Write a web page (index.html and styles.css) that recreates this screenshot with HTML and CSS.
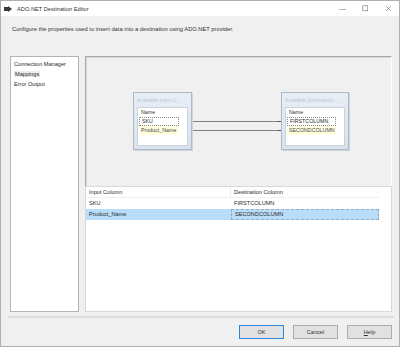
FILE: index.html
```html
<!DOCTYPE html>
<html>
<head>
<meta charset="utf-8">
<link rel="stylesheet" href="styles.css">
</head>
<body>
<div class="window">
  <div class="titlebar">
    <svg class="appicon" width="8" height="6" viewBox="0 0 8 6"><path d="M0 1h4v4H0z" fill="#3a3a3a"/><path d="M4 0l4 3-4 3z" fill="#3a3a3a"/></svg>
    <span class="title">ADO.NET Destination Editor</span>
    <div class="controls">
      <svg width="8" height="8" viewBox="0 0 8 8"><path d="M0 4.5h7" stroke="#666" stroke-width="0.5"/></svg>
      <svg width="8" height="8" viewBox="0 0 8 8"><rect x="0.8" y="0.8" width="5" height="5" fill="none" stroke="#555" stroke-width="0.5"/></svg>
      <svg width="8" height="8" viewBox="0 0 8 8"><path d="M1 1l5 5M6 1L1 6" stroke="#555" stroke-width="0.5"/></svg>
    </div>
  </div>
  <div class="body">
    <p class="desc">Configure the properties used to insert data into a destination using ADO.NET provider.</p>
    <div class="main">
      <div class="nav">
        <div class="nav-item">Connection Manager</div>
        <div class="nav-item"><span class="current">Mappings</span></div>
        <div class="nav-item">Error Output</div>
      </div>
      <div class="pane">
        <div class="diagram">
          <svg class="links" width="306" height="128" viewBox="0 0 306 128">
            <path d="M106 64.5H192" stroke="#505050" stroke-width="0.7"/>
            <path d="M106 73.5H192" stroke="#505050" stroke-width="0.7"/>
            <path d="M196 64.5h-4M196 73.5h-4" stroke="#505050" stroke-width="1.2"/>
          </svg>
          <div class="node node-in">
            <div class="node-title">Available Input C...</div>
            <div class="node-list">
              <div class="row head">Name</div>
              <div class="row focus">SKU</div>
              <div class="row hl">Product_Name</div>
            </div>
          </div>
          <div class="node node-out">
            <div class="node-title">Available Destination ...</div>
            <div class="node-list">
              <div class="row head">Name</div>
              <div class="row focus">FIRSTCOLUMN</div>
              <div class="row hl">SECONDCOLUMN</div>
            </div>
          </div>
        </div>
        <div class="grid">
          <div class="grow ghead">
            <div class="cell c1">Input Column</div>
            <div class="cell c2">Destination Column</div>
          </div>
          <div class="grow">
            <div class="cell c1">SKU</div>
            <div class="cell c2">FIRSTCOLUMN</div>
          </div>
          <div class="grow sel">
            <div class="cell c1">Product_Name</div>
            <div class="cell c2 fcell">SECONDCOLUMN</div>
          </div>
        </div>
      </div>
    </div>
    <div class="sep"></div>
    <div class="buttons">
      <button class="btn default">OK</button>
      <button class="btn">Cancel</button>
      <button class="btn"><u>H</u>elp</button>
    </div>
  </div>
</div>
</body>
</html>
```

FILE: styles.css
```css
* { box-sizing: border-box; }
html, body { margin: 0; padding: 0; }
body {
  width: 400px;
  height: 347px;
  overflow: hidden;
  background: #f0f0f0;
  font-family: "Liberation Sans", Arial, sans-serif;
  font-size: 5.6px;
  color: #2a2a2a;
}
.window {
  width: 400px;
  height: 347px;
  border: 1px solid #b0b0b0;
  background: #f0f0f0;
  display: flex;
  flex-direction: column;
}
.titlebar {
  height: 15px;
  background: #fff;
  display: flex;
  align-items: center;
  padding-left: 3px;
  flex: none;
}
.appicon { margin-right: 5px; }
.title { font-size: 5.7px; color: #333; }
.controls {
  margin-left: auto;
  display: flex;
  gap: 15px;
  padding-right: 6px;
}
.body {
  flex: 1;
  display: flex;
  flex-direction: column;
  padding: 0 7px 0 9px;
}
.desc {
  margin: 9px 0 0 2px;
  height: 8px;
  line-height: 8px;
  font-size: 5.75px;
  color: #333;
}
.main {
  margin-top: 23px;
  display: flex;
  gap: 6px;
  height: 256px;
}
.nav {
  width: 69px;
  background: #fff;
  border: 1px solid #b4b4b4;
  padding: 2px 0 0 3px;
}
.nav-item {
  height: 10px;
  line-height: 10px;
  white-space: nowrap;
}
.current {
  background: #ececec;
  padding: 0 1px;
}
.pane {
  flex: 1;
  display: flex;
  flex-direction: column;
}
.diagram {
  position: relative;
  height: 130px;
  background: #f0f0f0;
  border-top: 1px solid #a8a8a8;
  border-left: 1px solid #a8a8a8;
  border-right: 1px solid #fcfcfc;
  box-shadow: inset 1px 1px 0 #d8d8d8;
  overflow: hidden;
}
.links { position: absolute; left: 0; top: 0; }
.node {
  position: absolute;
  top: 35px;
  height: 58px;
  border: 1px solid #aeb9c6;
  background: linear-gradient(#e8eef6, #d9e2ed);
  box-shadow: 1px 1px 0 #d0d5dc;
  padding: 0 3px 3px 3px;
  display: flex;
  flex-direction: column;
}
.node-in { left: 47px; width: 59px; }
.node-out { left: 195px; width: 68px; }
.node-title {
  height: 14px;
  line-height: 14px;
  font-size: 5.2px;
  color: #bcc7d4;
  white-space: nowrap;
  overflow: hidden;
}
.node-list {
  flex: 1;
  background: #fff;
  border: 1px solid #cad2dc;
  padding: 0 8px 0 1px;
}
.row {
  height: 9px;
  line-height: 9px;
  padding-left: 2px;
  font-size: 5.3px;
  white-space: nowrap;
}
.row.head { color: #333; }
.row.focus { border: 1px dotted #888; line-height: 7px; }
.row.hl { background: #ffffe0; color: #444; }
.grid {
  flex: 1;
  background: #fff;
  border: 1px solid #d8d8d8;
  padding-right: 12px;
}
.grow {
  display: flex;
  height: 11px;
  line-height: 11px;
}
.cell {
  padding-left: 3px;
  white-space: nowrap;
}
.c1 { width: 145px; }
.c2 { flex: 1; }
.ghead .c1 { border-right: 1px solid #ececec; }
.ghead { border-bottom: 1px solid #f0f0f0; }
.sel { background: #b9dcf9; }
.fcell { border: 1px dashed #93acc6; line-height: 9px; }
.sep {
  margin: 4px -2px 0 -2px;
  height: 2px;
  background: #dcdcdc;
}
.buttons {
  display: flex;
  justify-content: flex-end;
  gap: 9px;
  margin-top: 7px;
}
.btn {
  width: 45px;
  height: 14px;
  border: 1px solid #adadad;
  background: #e1e1e1;
  font-family: "Liberation Sans", Arial, sans-serif;
  font-size: 5.6px;
  color: #333;
  padding: 0;
}
.btn.default { border-color: #2f86d9; }
```
